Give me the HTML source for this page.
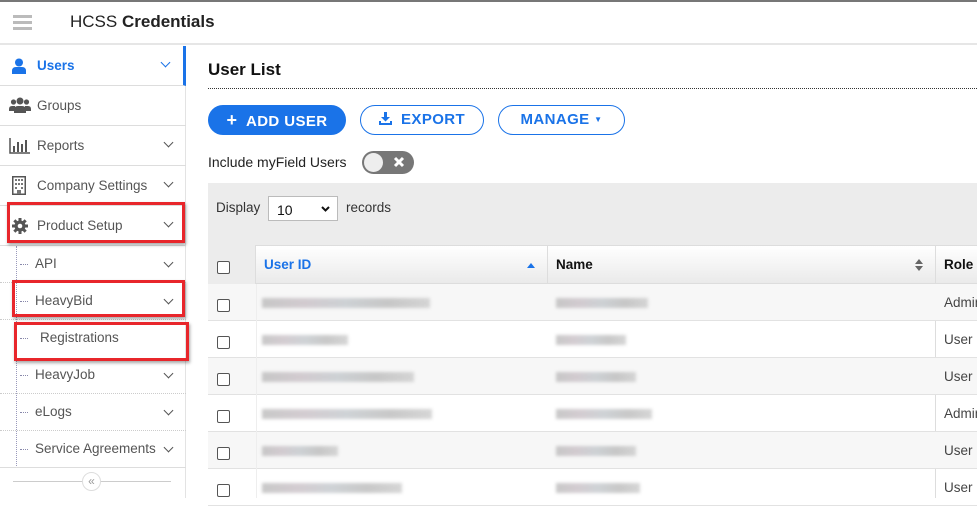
<!DOCTYPE html>
<html><head><style>
*{box-sizing:border-box;margin:0;padding:0}
body{width:977px;height:498px;overflow:hidden;background:#fff;font-family:"Liberation Sans",Arial,sans-serif;position:relative;color:#333}
.abs{position:absolute}
.top{left:0;top:0;width:977px;height:2px;background:#777}
.hdr{left:0;top:2px;width:977px;height:43px;border-bottom:2px solid #e6e6e6}
.ham{left:13px;top:15px;width:19px;height:3px;background:#bbb;box-shadow:0 6px 0 #bbb,0 12px 0 #bbb}
.title{left:70px;top:12px;font-size:17px;color:#222}
.side{left:0;top:46px;width:186px;height:452px;border-right:1px solid #e3e3e3}
.it{position:absolute;left:0;width:186px;height:40px;border-bottom:1px solid #ddd;font-size:13.5px;color:#555;line-height:39px;padding-left:37px}
.chev{position:absolute;right:14px;top:13px;width:7px;height:7px;border-right:1.6px solid #555;border-bottom:1.6px solid #555;transform:rotate(45deg)}
.sub{position:absolute;left:0;width:186px;height:37px;border-bottom:1px dotted #ccc;font-size:13.5px;color:#555;line-height:36px;padding-left:35px}
.sub:before{content:"";position:absolute;left:20px;top:18px;width:8px;border-top:1px dotted #88a}
.red{position:absolute;border:3px solid #e8262b;box-shadow:1px 2px 3px rgba(0,0,0,.35)}
.btn{top:105px;height:30px;border-radius:15px;font-size:15px;font-weight:bold;text-align:center;line-height:28px;letter-spacing:.4px}
.cb{position:absolute;left:9px;width:13px;height:13px;border:1px solid #555;border-radius:2px;background:#fff}
.blur{position:absolute;height:10px;background:linear-gradient(90deg,#bbb,#c9c0c6,#c3c8cc,#bbb,#ccc);filter:blur(1.5px);opacity:.8}
.row{position:absolute;left:208px;width:769px;height:37px;border-bottom:1px solid #e2e2e2}
.role{position:absolute;left:944px;font-size:13.5px;color:#444}
</style></head><body>
<div class="abs top"></div>
<div class="abs hdr"></div>
<div class="abs ham"></div>
<div class="abs title">HCSS <b>Credentials</b></div>

<div class="abs side">
 <div class="it" style="top:0;color:#1a73e8;font-weight:bold;border-right:3px solid #1a73e8">Users<span class="chev" style="border-color:#1a73e8"></span></div>
 <svg class="abs" style="left:12px;top:12px" width="14" height="16" viewBox="0 0 14 16"><circle cx="7" cy="4.5" r="4" fill="#1a73e8"/><path d="M0 16v-3q0-4 4-4h6q4 0 4 4v3z" fill="#1a73e8"/></svg>
 <div class="it" style="top:40px">Groups</div>
 <svg class="abs" style="left:9px;top:50px" width="22" height="18" viewBox="0 0 22 18"><circle cx="11" cy="5" r="3.5" fill="#555"/><circle cx="4.5" cy="6" r="2.6" fill="#555"/><circle cx="17.5" cy="6" r="2.6" fill="#555"/><path d="M5 17v-3q0-4 4-4h4q4 0 4 4v3z" fill="#555"/><path d="M0 15v-2q0-3 3-3h3v5z M22 15v-2q0-3-3-3h-3v5z" fill="#555"/></svg>
 <div class="it" style="top:80px">Reports<span class="chev"></span></div>
 <svg class="abs" style="left:9px;top:92px" width="21" height="16" viewBox="0 0 21 16"><path d="M1 0v15h20" stroke="#555" stroke-width="1.5" fill="none"/><rect x="4" y="8" width="2" height="6" fill="#555"/><rect x="8" y="4" width="2" height="10" fill="#555"/><rect x="12" y="6" width="2" height="8" fill="#555"/><rect x="16" y="2" width="2" height="12" fill="#555"/></svg>
 <div class="it" style="top:120px">Company Settings<span class="chev"></span></div>
 <svg class="abs" style="left:12px;top:130px" width="14" height="19" viewBox="0 0 14 19"><rect x="0.75" y="0.75" width="12.5" height="17.5" fill="none" stroke="#555" stroke-width="1.5"/><g fill="#777"><rect x="3" y="3" width="2" height="2"/><rect x="6" y="3" width="2" height="2"/><rect x="9" y="3" width="2" height="2"/><rect x="3" y="7" width="2" height="2"/><rect x="6" y="7" width="2" height="2"/><rect x="9" y="7" width="2" height="2"/><rect x="3" y="11" width="2" height="2"/><rect x="9" y="11" width="2" height="2"/><rect x="5" y="14" width="4" height="4"/></g></svg>
 <div class="it" style="top:160px">Product Setup<span class="chev"></span></div>
 <svg class="abs" style="left:12px;top:172px" width="16" height="16" viewBox="0 0 16 16"><g fill="#555"><circle cx="8" cy="8" r="5.5"/><rect x="6.5" y="0" width="3" height="16"/><rect x="0" y="6.5" width="16" height="3"/><rect x="6.5" y="0" width="3" height="16" transform="rotate(45 8 8)"/><rect x="6.5" y="0" width="3" height="16" transform="rotate(-45 8 8)"/></g><circle cx="8" cy="8" r="2.3" fill="#fff"/></svg>
 <div class="abs" style="left:16px;top:200px;height:222px;border-left:1px dotted #99b"></div>
 <div class="sub" style="top:200px">API<span class="chev"></span></div>
 <div class="sub" style="top:237px">HeavyBid<span class="chev"></span></div>
 <div class="sub" style="top:274px;padding-left:40px;border-bottom:none">Registrations</div>
 <div class="sub" style="top:311px">HeavyJob<span class="chev"></span></div>
 <div class="sub" style="top:348px">eLogs<span class="chev"></span></div>
 <div class="sub" style="top:385px;border-bottom:1px solid #ddd">Service Agreements<span class="chev"></span></div>
 <div class="abs" style="left:13px;top:435px;width:158px;border-top:1px solid #ccc"></div>
 <div class="abs" style="left:82px;top:426px;width:19px;height:19px;border:1px solid #ddd;border-radius:50%;background:#fff;font-size:12px;color:#999;text-align:center;line-height:16px">«</div>
</div>
<div class="red" style="left:7px;top:202px;width:178px;height:41px"></div>
<div class="red" style="left:12px;top:280px;width:173px;height:37px"></div>
<div class="red" style="left:14px;top:322px;width:175px;height:39px"></div>

<div class="abs" style="left:208px;top:60px;font-size:17px;font-weight:bold;color:#111">User List</div>
<div class="abs" style="left:208px;top:88px;width:769px;border-top:1px dotted #333"></div>
<div class="abs btn" style="left:208px;width:138px;background:#1a73e8;color:#fff;border:1px solid #1a73e8"><span style="font-size:18px;font-weight:900">+</span>&nbsp; ADD USER</div>
<div class="abs btn" style="left:360px;width:124px;border:1.5px solid #1a73e8;color:#1a73e8"><svg width="13" height="13" viewBox="0 0 13 13" style="vertical-align:-1px"><path d="M5 0h3v5h3l-4.5 4.5L2 5h3z M0 9h2v2h9v-2h2v4H0z" fill="#1a73e8"/></svg>&nbsp; EXPORT</div>
<div class="abs btn" style="left:498px;width:127px;border:1.5px solid #1a73e8;color:#1a73e8">MANAGE <span style="font-size:8px;vertical-align:2px">▼</span></div>
<div class="abs" style="left:208px;top:154px;font-size:14px;color:#222">Include myField Users</div>
<div class="abs" style="left:362px;top:151px;width:52px;height:23px;border-radius:12px;background:#777"></div>
<div class="abs" style="left:364px;top:153px;width:19px;height:19px;border-radius:50%;background:#eee"></div>
<svg class="abs" style="left:393px;top:156px" width="12" height="12" viewBox="0 0 12 12"><path d="M2 2L10 10M10 2L2 10" stroke="#fff" stroke-width="3"/></svg>

<div class="abs" style="left:208px;top:183px;width:769px;height:63px;background:#ececec"></div>
<div class="abs" style="left:216px;top:200px;font-size:13.5px;color:#333">Display</div>
<div class="abs" style="left:268px;top:196px;width:70px;height:25px;border:1px solid #bbb;background:#fff;font-size:14px;padding:5px 0 0 8px;color:#111">10<svg style="position:absolute;right:7px;top:9px" width="9" height="6" viewBox="0 0 9 6"><path d="M1 1l3.5 3.5L8 1" stroke="#111" stroke-width="2" fill="none"/></svg></div>
<div class="abs" style="left:346px;top:200px;font-size:13.5px;color:#333">records</div>

<div class="abs" style="left:208px;top:245px;width:769px;height:39px;background:linear-gradient(#fff,#eaeaea);border-top:1px solid #ddd;border-bottom:1px solid #ddd"></div>
<div class="abs" style="left:208px;top:245px;width:48px;height:39px;background:#ececec;border-right:1px solid #ddd"></div>
<div class="abs" style="left:547px;top:245px;height:39px;border-left:1px solid #ddd"></div>
<div class="abs" style="left:935px;top:245px;height:253px;border-left:1px solid #ddd"></div>
<div class="abs" style="left:264px;top:257px;font-size:13.5px;font-weight:bold;color:#1a73e8">User ID</div>
<svg class="abs" style="left:527px;top:263px" width="8" height="5" viewBox="0 0 8 5"><path d="M0 5L4 0L8 5z" fill="#1a73e8"/></svg>
<svg class="abs" style="left:915px;top:259px" width="8" height="12" viewBox="0 0 8 12"><path d="M0 5L4 0L8 5z M0 7L4 12L8 7z" fill="#666"/></svg>
<div class="abs" style="left:556px;top:257px;font-size:13.5px;font-weight:bold;color:#111">Name</div>
<div class="abs" style="left:944px;top:257px;font-size:13.5px;font-weight:bold;color:#111">Role</div>
<div class="cb" style="left:217px;top:261px"></div>

<div class="row" style="top:284px;background:#f7f7f7"></div>
<div class="row" style="top:321px"></div>
<div class="row" style="top:358px;background:#f7f7f7"></div>
<div class="row" style="top:395px"></div>
<div class="row" style="top:432px;background:#f7f7f7"></div>
<div class="row" style="top:469px"></div>
<div class="abs" style="left:256px;top:284px;height:214px;border-left:1px solid #eee"></div>

<div class="cb" style="left:217px;top:299px"></div><div class="blur" style="left:262px;top:298px;width:168px"></div><div class="blur" style="left:556px;top:298px;width:92px"></div><div class="role" style="top:295px">Admin</div>
<div class="cb" style="left:217px;top:336px"></div><div class="blur" style="left:262px;top:335px;width:86px"></div><div class="blur" style="left:556px;top:335px;width:70px"></div><div class="role" style="top:332px">User</div>
<div class="cb" style="left:217px;top:373px"></div><div class="blur" style="left:262px;top:372px;width:152px"></div><div class="blur" style="left:556px;top:372px;width:80px"></div><div class="role" style="top:369px">User</div>
<div class="cb" style="left:217px;top:410px"></div><div class="blur" style="left:262px;top:409px;width:170px"></div><div class="blur" style="left:556px;top:409px;width:96px"></div><div class="role" style="top:406px">Admin</div>
<div class="cb" style="left:217px;top:447px"></div><div class="blur" style="left:262px;top:446px;width:76px"></div><div class="blur" style="left:556px;top:446px;width:80px"></div><div class="role" style="top:443px">User</div>
<div class="cb" style="left:217px;top:484px"></div><div class="blur" style="left:262px;top:483px;width:140px"></div><div class="blur" style="left:556px;top:483px;width:84px"></div><div class="role" style="top:480px">User</div>
</body></html>
